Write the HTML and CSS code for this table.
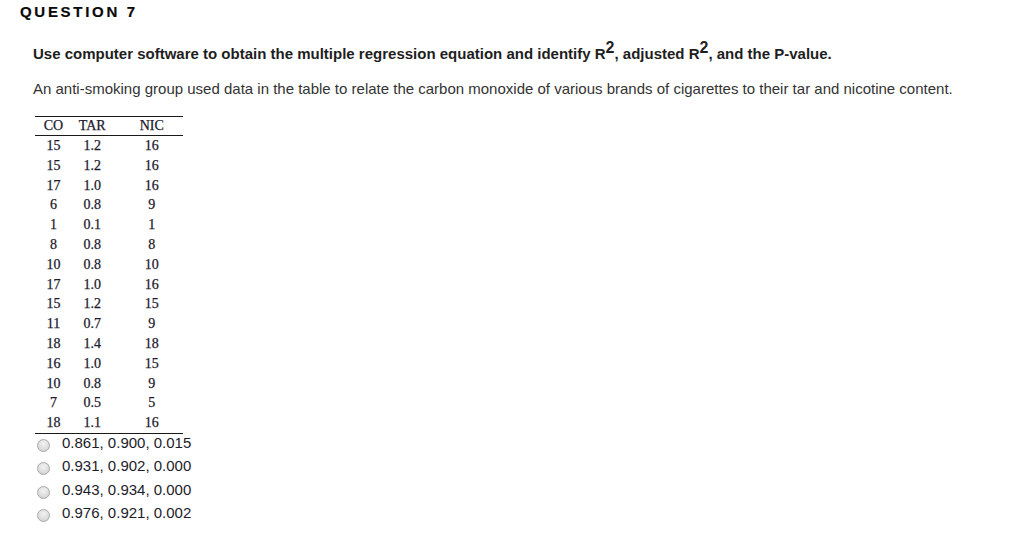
FILE: index.html
```html
<!DOCTYPE html>
<html lang="en">
<head>
<meta charset="utf-8">
<title>Question 7</title>
<link rel="stylesheet" href="styles.css">
</head>
<body>
<div class="page">
  <h2 class="qtitle">QUESTION 7</h2>
  <div class="qbody">
    <p class="prompt">Use computer software to obtain the multiple regression equation and identify R<sup>2</sup>, adjusted R<sup>2</sup>, and the P-value.</p>
    <p class="desc">An anti-smoking group used data in the table to relate the carbon monoxide of various brands of cigarettes to their tar and nicotine content.</p>
    <table class="data">
      <thead>
        <tr><th class="c1">CO</th><th class="c2">TAR</th><th class="c3">NIC</th></tr>
      </thead>
      <tbody>
        <tr><td class="c1">15</td><td class="c2">1.2</td><td class="c3">16</td></tr>
        <tr><td class="c1">15</td><td class="c2">1.2</td><td class="c3">16</td></tr>
        <tr><td class="c1">17</td><td class="c2">1.0</td><td class="c3">16</td></tr>
        <tr><td class="c1">6</td><td class="c2">0.8</td><td class="c3">9</td></tr>
        <tr><td class="c1">1</td><td class="c2">0.1</td><td class="c3">1</td></tr>
        <tr><td class="c1">8</td><td class="c2">0.8</td><td class="c3">8</td></tr>
        <tr><td class="c1">10</td><td class="c2">0.8</td><td class="c3">10</td></tr>
        <tr><td class="c1">17</td><td class="c2">1.0</td><td class="c3">16</td></tr>
        <tr><td class="c1">15</td><td class="c2">1.2</td><td class="c3">15</td></tr>
        <tr><td class="c1">11</td><td class="c2">0.7</td><td class="c3">9</td></tr>
        <tr><td class="c1">18</td><td class="c2">1.4</td><td class="c3">18</td></tr>
        <tr><td class="c1">16</td><td class="c2">1.0</td><td class="c3">15</td></tr>
        <tr><td class="c1">10</td><td class="c2">0.8</td><td class="c3">9</td></tr>
        <tr><td class="c1">7</td><td class="c2">0.5</td><td class="c3">5</td></tr>
        <tr><td class="c1">18</td><td class="c2">1.1</td><td class="c3">16</td></tr>
      </tbody>
    </table>
    <ul class="options">
      <li class="option"><span class="radio"></span><span class="opt-text">0.861, 0.900, 0.015</span></li>
      <li class="option"><span class="radio"></span><span class="opt-text">0.931, 0.902, 0.000</span></li>
      <li class="option"><span class="radio"></span><span class="opt-text">0.943, 0.934, 0.000</span></li>
      <li class="option"><span class="radio"></span><span class="opt-text">0.976, 0.921, 0.002</span></li>
    </ul>
  </div>
</div>
</body>
</html>
```
FILE: styles.css
```css
html, body {
  margin: 0;
  padding: 0;
  background: #ffffff;
}

.page {
  font-family: "Liberation Sans", Arial, sans-serif;
  color: #222222;
  padding: 3px 0 0 20px;
}

.qtitle {
  margin: 0;
  font-size: 15px;
  line-height: 17px;
  font-weight: bold;
  letter-spacing: 2.7px;
  color: #0a0a0a;
  -webkit-text-stroke: 0.2px #0a0a0a;
}

.qbody {
  padding-left: 13px;
}

.prompt {
  margin: 25px 0 0 0;
  font-size: 15px;
  line-height: 17px;
  font-weight: bold;
  color: #1e1e1e;
}

.prompt sup {
  font-size: 16px;
  line-height: 0;
  vertical-align: 6px;
  font-weight: bold;
}

.desc {
  margin: 18px 0 0 0;
  font-size: 15px;
  line-height: 17px;
  color: #333333;
}

.data {
  margin: 19px 0 0 2px;
  border-collapse: collapse;
  font-family: "Liberation Serif", "Times New Roman", serif;
  font-size: 14px;
  color: #21182b;
  width: 148px;
  border-top: 1px solid #1a1a1a;
  border-bottom: 1px solid #1a1a1a;
  -webkit-text-stroke: 0.25px #21182b;
}

.data th,
.data td {
  padding: 0;
  text-align: center;
  font-weight: normal;
  height: 19.8px;
  line-height: 19.8px;
}

.data thead th {
  height: 18px;
  line-height: 18px;
  border-bottom: 1px solid #1a1a1a;
}

.data .c1 { width: 39px; }
.data .c2 { width: 42px; }
.data .c3 { width: 67px; padding-left: 8px; }

.options {
  list-style: none;
  margin: 0;
  padding: 0;
}

.option {
  display: flex;
  align-items: flex-start;
  height: 23.4px;
  font-size: 15px;
  color: #1c1c2a;
}

.radio {
  display: block;
  flex: none;
  width: 11px;
  height: 11px;
  margin: 5px 12px 0 4px;
  border-radius: 50%;
  border: 1px solid #a9a9a9;
  background: radial-gradient(circle at 50% 35%, #f2f2f2 0%, #dcdcdc 60%, #c9c9c9 100%);
}

.opt-text {
  line-height: 17px;
}
```
